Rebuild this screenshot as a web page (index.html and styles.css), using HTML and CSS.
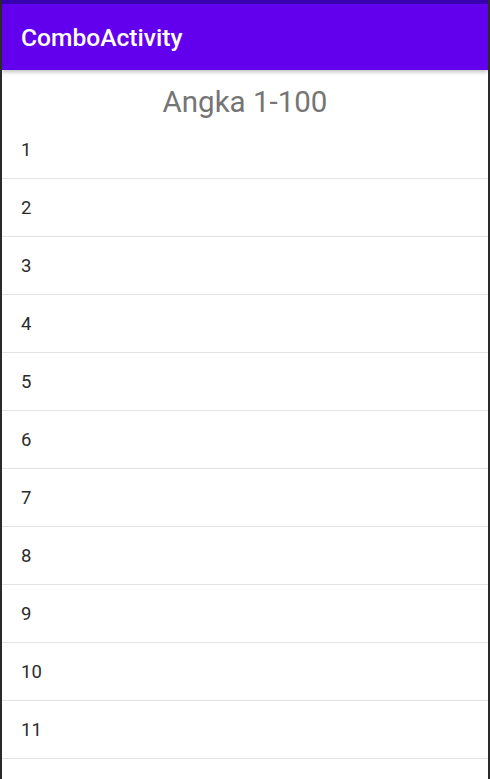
FILE: index.html
```html
<!doctype html>
<html>
<head>
<meta charset="utf-8">
<title>ComboActivity</title>
<link rel="stylesheet" href="styles.css">
</head>
<body>

<div class="screen">

    <div class="statusbar"></div>

    <header class="toolbar">
        <h1>ComboActivity</h1>
    </header>

    <section class="content">

        <h2 class="caption">Angka 1-100</h2>

        <ul class="numbers">
            <li>1</li>
            <li>2</li>
            <li>3</li>
            <li>4</li>
            <li>5</li>
            <li>6</li>
            <li>7</li>
            <li>8</li>
            <li>9</li>
            <li>10</li>
            <li>11</li>
        </ul>

    </section>

</div>

</body>
</html>
```

FILE: styles.css
```css
html, body { margin: 0; padding: 0; height: 100%; overflow: hidden; background-color: #fff; }
* { font-family: Roboto, "Noto Sans", "Liberation Sans", sans-serif; box-sizing: border-box; }

.screen { height: 779px; border-left: 2px solid #2a2a2a; border-right: 2px solid #2a2a2a; overflow: hidden; }

.statusbar { height: 4px; background-color: #3700b3; }

.toolbar { position: relative; z-index: 1; height: 66px; padding: 0 0 0 19px; display: flex; align-items: center; background-color: #6200ee; box-shadow: 0 2px 4px rgba(0,0,0,0.25); }
.toolbar h1 { margin: 0; font-size: 24.6px; font-weight: 500; color: #fff; }

.caption { margin: 0; height: 51px; padding: 18px 0 0; text-align: center; font-size: 29.5px; line-height: 29px; font-weight: 400; color: #757575; }

.numbers { list-style: none; margin: 0; padding: 0; }
.numbers li { height: 58px; padding: 0 0 0 19px; display: flex; align-items: center; border-bottom: 1px solid #e3e3e3; font-size: 18.5px; color: #2b2b2b; }
```
